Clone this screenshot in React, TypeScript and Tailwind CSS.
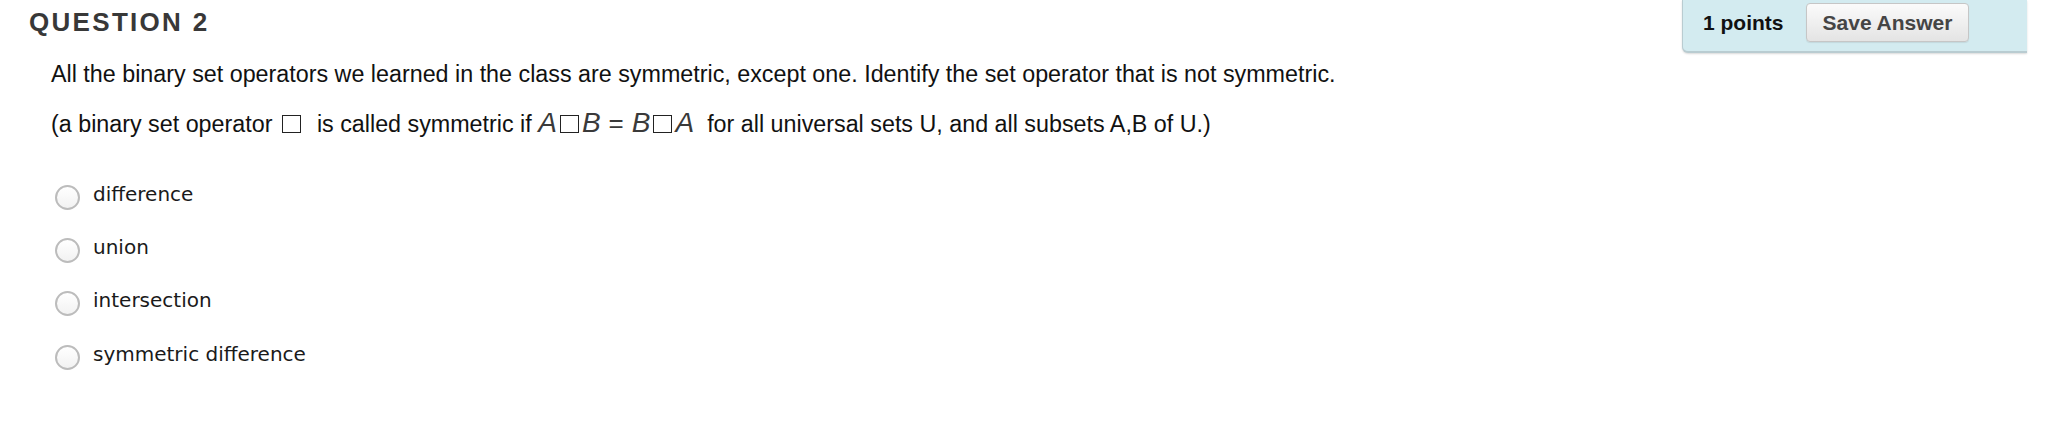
const OPTIONS = ["difference", "union", "intersection", "symmetric difference"];

function OpBox() {
  return <span className="mx-[3px] inline-block h-[18px] w-[19px] border-[1.5px] border-[#222] align-[-1px]" />;
}

function MathVar({ children }: { children: string }) {
  return <span className="italic text-[#3a3a3a] text-[28px] font-light">{children}</span>;
}

function Radio({ label }: { label: string }) {
  return (
    <label className="flex items-start gap-[13px]">
      <span className="mt-[3px] block h-[25px] w-[25px] rounded-full border-2 border-[#bcbcbc] bg-gradient-to-b from-white to-[#f2f2f2]" />
      <span className="text-[20px] leading-[24px] text-[#1a1a1a] [font-family:'DejaVu_Sans',sans-serif]">{label}</span>
    </label>
  );
}

export default function App() {
  return (
    <div className="h-[439px] w-[2046px] overflow-hidden bg-white [font-family:'Liberation_Sans',Arial,sans-serif]">
      <div className="flex items-start justify-between">
        <h2 className="pl-[29px] pt-[9px] text-[26px] font-bold leading-[26px] tracking-[2.3px] text-[#383838]">
          QUESTION 2
        </h2>
        <div className="mr-[19px] flex h-[53px] w-[345px] items-start rounded-bl-[6px] border-b-2 border-l border-[#b9ccd1] bg-[#d3ebf0] pl-[20px] pt-[3px] shadow-[0_1px_2px_rgba(0,0,0,0.15)]">
          <div className="flex h-[39px] items-center gap-[22px]">
            <span className="text-[21px] font-bold text-[#111]">1 points</span>
            <button className="h-[39px] rounded-[4px] border border-[#c6c6c6] bg-gradient-to-b from-[#fbfbfb] to-[#e4e4e4] px-[16px] text-[21px] font-bold text-[#454545] shadow-[0_1px_1px_rgba(0,0,0,0.08)]">
              Save Answer
            </button>
          </div>
        </div>
      </div>

      <div className="pl-[51px] text-[23.3px] leading-[30px] text-[#111]">
        <p className="mt-[6px]">
          All the binary set operators we learned in the class are symmetric, except one. Identify the set operator that is not symmetric.
        </p>
        <p className="mt-[19px] whitespace-pre">
          (a binary set operator <OpBox />{"  "}is called symmetric if <MathVar>A</MathVar>
          <OpBox />
          <MathVar>B</MathVar>
          <span className="mx-[8px] text-[26px] text-[#3a3a3a]">=</span>
          <MathVar>B</MathVar>
          <OpBox />
          <MathVar>A</MathVar>
          {"  "}for all universal sets U, and all subsets A,B of U.)
        </p>
      </div>

      <div className="mt-[43px] flex flex-col gap-[25.2px] pl-[55px]">
        {OPTIONS.map((o) => (
          <Radio key={o} label={o} />
        ))}
      </div>
    </div>
  );
}
